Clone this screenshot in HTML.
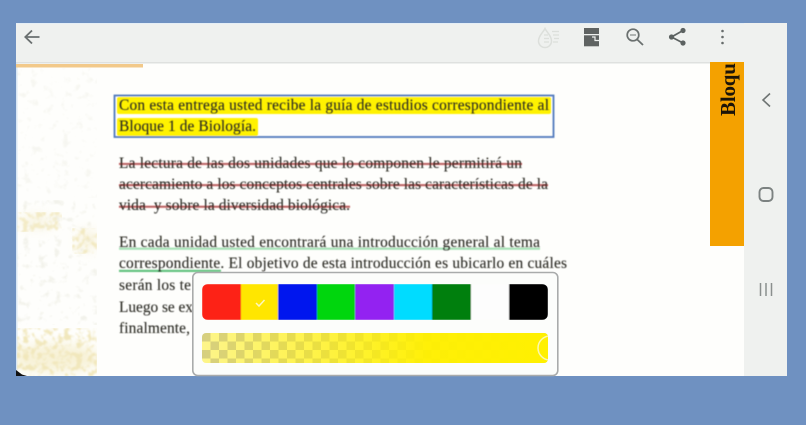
<!DOCTYPE html>
<html lang="es">
<head>
<meta charset="utf-8">
<title>Lector</title>
<style>
html,body{margin:0;padding:0;width:806px;height:425px;overflow:hidden;background:#6f91c1}
svg{display:block}
text{font-family:"Liberation Serif",serif}
.t text{font-size:15.4px;fill:#2a2923;stroke:#2a2923;stroke-width:.1px}
</style>
</head>
<body>
<svg width="806" height="425" viewBox="0 0 806 425" xmlns="http://www.w3.org/2000/svg">
<defs>
<filter id="b" x="-5%" y="-5%" width="110%" height="110%"><feGaussianBlur stdDeviation="0.42"/></filter>
<filter id="b3" x="-100%" y="-150%" width="300%" height="400%"><feGaussianBlur stdDeviation="6"/></filter>
<filter id="n" x="0" y="0" width="100%" height="100%">
<feTurbulence type="fractalNoise" baseFrequency="0.17" numOctaves="3" seed="7"/>
<feColorMatrix type="matrix" values="0 0 0 0 0.88  0 0 0 0 0.8  0 0 0 0 0.5  3.6 3.6 0 0 -3.4"/>
<feGaussianBlur stdDeviation="0.7"/>
</filter>
<filter id="n2" x="0" y="0" width="100%" height="100%">
<feTurbulence type="fractalNoise" baseFrequency="0.13" numOctaves="3" seed="3"/>
<feColorMatrix type="matrix" values="0 0 0 0 0.84  0 0 0 0 0.84  0 0 0 0 0.76  3.4 3.4 0 0 -3.75"/>
<feGaussianBlur stdDeviation="0.6"/>
</filter>
<pattern id="ck" x="202" y="333" width="17" height="17" patternUnits="userSpaceOnUse">
<rect width="17" height="17" fill="#fdf58a"/>
<rect width="8.5" height="8.5" fill="#d6cf80"/>
<rect x="8.5" y="8.5" width="8.5" height="8.5" fill="#d6cf80"/>
</pattern>
<linearGradient id="fade" x1="202" x2="548" y1="0" y2="0" gradientUnits="userSpaceOnUse">
<stop offset="0" stop-color="#fff000" stop-opacity="0"/>
<stop offset="0.65" stop-color="#fff000" stop-opacity="0.95"/>
<stop offset="1" stop-color="#fff000"/>
</linearGradient>
<clipPath id="round"><rect x="202" y="284" width="346" height="36" rx="6"/></clipPath>
<clipPath id="round2"><rect x="202" y="333" width="346" height="30" rx="4"/></clipPath>
<clipPath id="margin"><rect x="17" y="63" width="80" height="313"/></clipPath>
</defs>

<!-- screen -->
<rect x="16" y="23" width="771" height="353" fill="#eff1ef"/>
<rect x="16" y="23" width="728" height="1" fill="#e4eef6"/>
<rect x="16" y="63" width="728" height="313" fill="#fefefc"/>
<rect x="16" y="62" width="728" height="1.5" fill="#dfe1df"/>
<rect x="16" y="63" width="1.5" height="313" fill="#d8e6f4"/>

<!-- decorative left margin -->
<g clip-path="url(#margin)">
<rect x="17" y="68" width="80" height="130" filter="url(#n2)" opacity="0.4"/>
<rect x="17" y="200" width="80" height="125" filter="url(#n2)" opacity="0.65"/>
<ellipse cx="36" cy="222" rx="18" ry="6" fill="#f3ecca" filter="url(#b3)" opacity="0.6"/>
<ellipse cx="88" cy="240" rx="9" ry="10" fill="#f3e9c4" filter="url(#b3)" opacity="0.6"/>
<ellipse cx="55" cy="358" rx="45" ry="14" fill="#f4ecc6" filter="url(#b3)" opacity="0.7"/>
<rect x="17" y="212" width="45" height="20" filter="url(#n)" opacity="0.8"/>
<rect x="72" y="228" width="25" height="26" filter="url(#n)" opacity="0.9"/>
<rect x="17" y="328" width="80" height="48" filter="url(#n)"/>
</g>
<path d="M16 370l6 4.500 5 1.500h-11z" fill="#111"/>

<!-- progress -->
<rect x="16" y="64" width="127" height="3.500" fill="#f2c98a"/>

<!-- highlights -->
<g filter="url(#b)">
<rect x="117" y="97" width="434" height="17" rx="2" fill="#fff200"/>
<rect x="117" y="118" width="141" height="18" rx="2" fill="#fff200"/>
<rect x="114.500" y="95.500" width="439" height="41.500" fill="none" stroke="#4f79bd" stroke-width="1.800"/>
<rect x="119" y="247.600" width="421" height="2.200" fill="#a6e2b6"/>
<rect x="119" y="269.800" width="102" height="2.200" fill="#62c27e"/>
</g>
<g filter="url(#b)" fill="#eca0a0">
<rect x="119" y="162.800" width="403" height="2.400"/>
<rect x="119" y="184" width="429" height="2.400"/>
<rect x="119" y="205.600" width="231" height="2.400"/>
</g>

<!-- text -->
<g class="t" filter="url(#b)">
<text x="119" y="110" textLength="430">Con esta entrega usted recibe la guía de estudios correspondiente al</text>
<text x="119" y="131" textLength="137">Bloque 1 de Biología.</text>
<text x="119" y="168" textLength="403">La lectura de las dos unidades que lo componen le permitirá un</text>
<text x="119" y="189" textLength="429">acercamiento a los conceptos centrales sobre las características de la</text>
<text x="119" y="210" textLength="231" xml:space="preserve">vida  y sobre la diversidad biológica.</text>
<text x="119" y="247" textLength="421">En cada unidad usted encontrará una introducción general al tema</text>
<text x="119" y="268" textLength="448">correspondiente. El objetivo de esta introducción es ubicarlo en cuáles</text>
<text x="119" y="290" textLength="72">serán los te</text>
<text x="119" y="312" textLength="74">Luego se ex</text>
<text x="119" y="333" textLength="71">finalmente,</text>
</g>

<!-- strike -->
<g filter="url(#b)" fill="#7c2628" opacity="0.7">
<rect x="119" y="163.400" width="403" height="1"/>
<rect x="119" y="184.600" width="429" height="1"/>
<rect x="119" y="206.200" width="231" height="1"/>
</g>

<!-- orange tab -->
<rect x="710" y="62" width="34" height="184" fill="#f4a100"/>
<text transform="translate(735 116) rotate(-90)" font-size="21" font-weight="bold" fill="#1c1408" textLength="53">Bloqu</text>
<rect x="744" y="24" width="43" height="352" fill="#eff1ef"/>

<!-- colour panel -->
<rect x="192.800" y="272.500" width="365" height="103" rx="5" fill="#fcfdfb" stroke="#a9abab" stroke-width="1.600"/>
<g clip-path="url(#round)" filter="url(#b)">
<rect x="202" y="284" width="39" height="36" fill="#fd2412"/>
<rect x="241" y="284" width="37" height="36" fill="#ffe600"/>
<rect x="278" y="284" width="39" height="36" fill="#0316ee"/>
<rect x="317" y="284" width="38" height="36" fill="#00d60e"/>
<rect x="355" y="284" width="39" height="36" fill="#9321f1"/>
<rect x="394" y="284" width="38" height="36" fill="#00dcff"/>
<rect x="432" y="284" width="39" height="36" fill="#007f0a"/>
<rect x="471" y="284" width="38" height="36" fill="#fdfdfd"/>
<rect x="509" y="284" width="39" height="36" fill="#020202"/>
</g>
<path d="M256 303l3 3 5.500-6" fill="none" stroke="#fdf6c0" stroke-width="1.500"/>
<g clip-path="url(#round2)">
<rect x="202" y="333" width="346" height="30" fill="url(#ck)"/>
<rect x="202" y="333" width="346" height="30" fill="url(#fade)"/>
<circle cx="550" cy="348" r="12" fill="none" stroke="#fbf7b0" stroke-width="1.500"/>
</g>

<!-- back arrow -->
<path d="M39.500 37H25.500M32 30.500L25.300 37 32 43.500" fill="none" stroke="#6a7070" stroke-width="1.800"/>

<!-- drop icon -->
<g fill="none" stroke="#dcdfdb" stroke-width="1.300">
<path d="M545 28.500c-2 4-6.500 7.500-6.500 12.500a6.500 6.500 0 0 0 13 0c0-5-4.500-8.500-6.500-12.500z" stroke-width="1.500"/>
<path d="M544 35h4M544 38.500h5M544 42h5M552 31.500h7M553 35h6M554 38.500h5M553 42h5"/>
</g>

<!-- document icon -->
<rect x="584" y="28" width="15" height="6" fill="#5f6362"/>
<rect x="584" y="35.300" width="15" height="11" fill="#5f6362"/>
<path d="M592 37h3v3.500h4" fill="none" stroke="#eff1ef" stroke-width="1.200"/>

<!-- search -->
<circle cx="633" cy="35" r="5.800" fill="none" stroke="#6a706f" stroke-width="1.700"/>
<path d="M630 35h6" stroke="#9a9f9d" stroke-width="1.500"/>
<path d="M637.200 39.500l5.800 5.500" stroke="#6a706f" stroke-width="1.800"/>

<!-- share -->
<g fill="#5c6261">
<circle cx="671.500" cy="37" r="2.600"/>
<circle cx="683" cy="30.500" r="2.600"/>
<circle cx="683" cy="43" r="2.600"/>
</g>
<path d="M683 30.500L671.500 37 683 43" fill="none" stroke="#5c6261" stroke-width="1.700"/>

<!-- dots -->
<g fill="#666c6b">
<circle cx="722.500" cy="31" r="1.300"/>
<circle cx="722.500" cy="37" r="1.300"/>
<circle cx="722.500" cy="43" r="1.300"/>
</g>

<!-- nav -->
<path d="M770 93.500l-7 6.500 7 6.500" fill="none" stroke="#6e7473" stroke-width="1.600"/>
<rect x="759.500" y="188" width="13" height="13" rx="4" fill="none" stroke="#7c8281" stroke-width="1.900"/>
<path d="M760.500 283v13M766 283v13M771.500 283v13" fill="none" stroke="#8a8f8e" stroke-width="1.500"/>
</svg>
</body>
</html>
